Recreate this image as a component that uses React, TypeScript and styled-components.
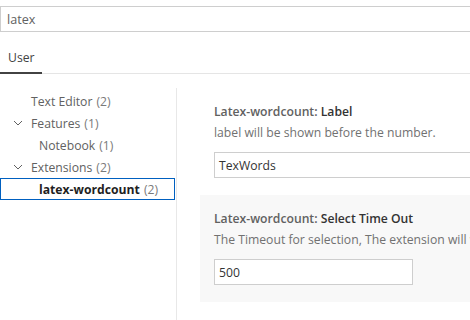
import styled, { createGlobalStyle } from "styled-components";

const GlobalStyle = createGlobalStyle`
  html, body {
    margin: 0;
    padding: 0;
    background: #ffffff;
    width: 470px;
    height: 320px;
    overflow: hidden;
  }
  body {
    font-family: "Open Sans", "Noto Sans", sans-serif;
    font-size: 12.2px;
    color: #616161;
  }
`;

type TreeItem = {
  name: string;
  count: number;
  depth: number;
  expandable?: boolean;
  selected?: boolean;
};

const tree: TreeItem[] = [
  { name: "Text Editor", count: 2, depth: 1 },
  { name: "Features", count: 1, depth: 0, expandable: true },
  { name: "Notebook", count: 1, depth: 2 },
  { name: "Extensions", count: 2, depth: 0, expandable: true },
  { name: "latex-wordcount", count: 2, depth: 2, selected: true },
];

function Chevron() {
  return (
    <svg width="10" height="10" viewBox="0 0 10 10">
      <path d="M1 3 L5 7 L9 3" fill="none" stroke="#616161" strokeWidth="1" />
    </svg>
  );
}

export default function App() {
  return (
    <>
      <GlobalStyle />
      <Page>
        <SearchBox>latex</SearchBox>
        <TabBar>
          <Tab $active>User</Tab>
        </TabBar>
        <Body>
          <Sidebar>
            {tree.map((item) => (
              <TreeRow key={item.name} $depth={item.depth} $selected={item.selected}>
                {item.expandable && (
                  <Twistie>
                    <Chevron />
                  </Twistie>
                )}
                <TreeName $selected={item.selected}>{item.name}</TreeName>
                <Count>({item.count})</Count>
              </TreeRow>
            ))}
          </Sidebar>
          <Settings>
            <SettingItem>
              <Title>
                <Category>Latex-wordcount: </Category>
                <Label>Label</Label>
              </Title>
              <Description>label will be shown before the number.</Description>
              <Input $width="260px">TexWords</Input>
            </SettingItem>
            <SettingItem $focused>
              <Title>
                <Category>Latex-wordcount: </Category>
                <Label>Select Time Out</Label>
              </Title>
              <Description>The Timeout for selection, The extension will wait</Description>
              <Input $width="199px">500</Input>
            </SettingItem>
          </Settings>
        </Body>
      </Page>
    </>
  );
}

const Page = styled.div`
  width: 470px;
  height: 320px;
  display: flex;
  flex-direction: column;
  overflow: hidden;
`;

const SearchBox = styled.div`
  margin-top: 6px;
  height: 26px;
  width: 480px;
  box-sizing: border-box;
  border: 1px solid #cecece;
  padding-left: 6px;
  display: flex;
  align-items: center;
  font-size: 12.6px;
  color: #616161;
`;

const TabBar = styled.div`
  margin-top: 6px;
  height: 36px;
  box-sizing: border-box;
  border-bottom: 1px solid #e5e5e5;
  display: flex;
  align-items: flex-end;
`;

const Tab = styled.div<{ $active?: boolean }>`
  width: 42px;
  height: 36px;
  box-sizing: border-box;
  padding-left: 8px;
  padding-top: 11px;
  margin-bottom: -1px;
  color: ${(p) => (p.$active ? "#424242" : "#8a8a8a")};
  border-bottom: 2px solid ${(p) => (p.$active ? "#424242" : "transparent")};
`;

const Body = styled.div`
  flex: 1;
  display: flex;
  padding-top: 14px;
`;

const Sidebar = styled.div`
  width: 177px;
  flex-shrink: 0;
  box-sizing: border-box;
  padding-top: 2px;
  border-right: 1px solid #e8e8e8;
  display: flex;
  flex-direction: column;
`;

const TreeRow = styled.div<{ $depth: number; $selected?: boolean }>`
  height: 22px;
  box-sizing: border-box;
  display: flex;
  align-items: center;
  padding-left: ${(p) => (p.$depth === 0 ? 12 : p.$depth === 1 ? 30 : 38)}px;
  margin-right: 1px;
  border: 1px solid ${(p) => (p.$selected ? "#0060c0" : "transparent")};
  white-space: nowrap;
`;

const Twistie = styled.span`
  width: 18px;
  display: flex;
  align-items: center;
`;

const TreeName = styled.span<{ $selected?: boolean }>`
  color: ${(p) => (p.$selected ? "#1f1f1f" : "#616161")};
  font-weight: ${(p) => (p.$selected ? 700 : 400)};
  margin-right: 4px;
`;

const Count = styled.span`
  color: #7a7a7a;
`;

const Settings = styled.div`
  flex: 1;
  display: flex;
  flex-direction: column;
  padding-left: 23px;
  overflow: hidden;
`;

const SettingItem = styled.div<{ $focused?: boolean }>`
  padding: 14px 0 17px 14px;
  background: ${(p) => (p.$focused ? "#f8f8f8" : "transparent")};
  white-space: nowrap;
  overflow: hidden;
`;

const Title = styled.div`
  font-weight: 600;
  line-height: 20px;
`;

const Category = styled.span`
  color: #616161;
`;

const Label = styled.span`
  color: #333333;
`;

const Description = styled.div`
  margin-top: 1px;
  line-height: 20px;
  color: #717171;
`;

const Input = styled.div<{ $width: string }>`
  margin-top: 9px;
  width: ${(p) => p.$width};
  height: 26px;
  box-sizing: border-box;
  border: 1px solid #cecece;
  background: #ffffff;
  padding-left: 4px;
  display: flex;
  align-items: center;
  color: #333333;
`;
